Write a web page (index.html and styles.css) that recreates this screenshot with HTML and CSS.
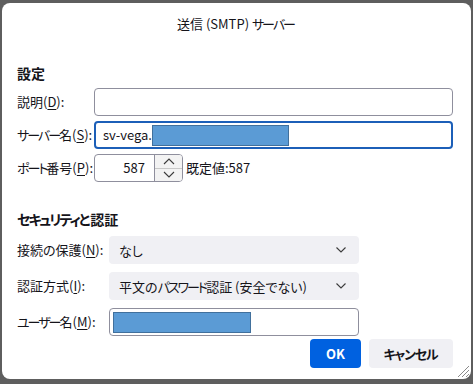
FILE: index.html
```html
<!DOCTYPE html>
<html lang="ja">
<head>
<meta charset="utf-8">
<title>送信 (SMTP) サーバー</title>
<link rel="stylesheet" href="styles.css">
</head>
<body>
<div class="dialog">
  <div class="title">送信 (SMTP) <span class="kana">サーバ</span>ー</div>

  <div class="heading first">設定</div>
  <div class="grid grid-settings">
    <label class="label">説明(<u>D</u>):</label>
    <div class="input"></div>

    <label class="label"><span class="kana">サーバー</span>名(<u>S</u>):</label>
    <div class="input focused"><span class="val">sv-vega.</span><span class="redact redact-host"></span></div>

    <label class="label"><span class="kana">ポート</span>番号(<u>P</u>):</label>
    <div class="port-row">
      <div class="number">
        <span class="num-val">587</span>
        <div class="spinner">
          <div class="spin">
            <svg width="12" height="7" viewBox="0 0 12 7"><path d="M1 6 L6 1 L11 6" fill="none" stroke="#3b3b3b" stroke-width="1.1"/></svg>
          </div>
          <div class="spin">
            <svg width="12" height="7" viewBox="0 0 12 7"><path d="M1 1 L6 6 L11 1" fill="none" stroke="#3b3b3b" stroke-width="1.1"/></svg>
          </div>
        </div>
      </div>
      <span class="default">既定値:587</span>
    </div>
  </div>

  <div class="heading second"><span class="kana">セキュリティ</span>と認証</div>
  <div class="grid grid-security">
    <label class="label">接続の保護(<u>N</u>):</label>
    <div class="select"><span>なし</span>
      <svg class="chev" width="10" height="6" viewBox="0 0 10 6"><path d="M0.5 0.5 L5 5 L9.5 0.5" fill="none" stroke="#3b3b3b" stroke-width="1.1"/></svg>
    </div>

    <label class="label">認証方式(<u>I</u>):</label>
    <div class="select"><span>平文の<span class="kana">パスワード</span>認証 (安全でない)</span>
      <svg class="chev" width="10" height="6" viewBox="0 0 10 6"><path d="M0.5 0.5 L5 5 L9.5 0.5" fill="none" stroke="#3b3b3b" stroke-width="1.1"/></svg>
    </div>

    <label class="label"><span class="kana">ユーザー</span>名(<u>M</u>):</label>
    <div class="input user"><span class="redact redact-user"></span></div>
  </div>

  <div class="buttons">
    <button class="btn primary">OK</button>
    <button class="btn secondary"><span class="kana btn-kana">キャンセ</span>ル</button>
  </div>

  <svg class="grip" width="13" height="13" viewBox="0 0 13 13">
    <path d="M12 1 L1 12 M12 5 L5 12 M12 9 L9 12" stroke="#8a8a8a" stroke-width="1"/>
  </svg>
</div>
</body>
</html>
```

FILE: styles.css
```css
html, body {
  margin: 0;
  padding: 0;
}
body {
  width: 473px;
  height: 384px;
  overflow: hidden;
  background: #5e5e5e;
  font-family: "Noto Sans CJK JP", "Noto Sans", sans-serif;
  font-size: 13px;
  font-feature-settings: "palt" 1;
  color: #15141a;
}
.kana {
  letter-spacing: -2px;
}
.btn-kana {
  letter-spacing: -1.2px;
}
.dialog {
  position: relative;
  box-sizing: border-box;
  margin: 3px 2px 0 2px;
  height: 376px;
  background: #ffffff;
  border-radius: 8px;
  padding: 0 18px 0 15px;
  display: flex;
  flex-direction: column;
}
.title {
  height: 42px;
  line-height: 42px;
  text-align: center;
  margin-left: -15px;
  margin-right: -18px;
  font-size: 13px;
}
.heading {
  height: 20px;
  line-height: 20px;
  font-weight: 700;
  font-size: 14px;
}
.heading.first { margin-top: 18px; margin-bottom: 5px; }
.heading.second { margin-top: 27px; margin-bottom: 7px; }
.grid {
  display: grid;
  align-items: center;
}
.grid-settings {
  grid-template-columns: 77px 1fr;
  row-gap: 5px;
}
.grid-security {
  grid-template-columns: 92px 250px;
  row-gap: 8px;
}
.label {
  line-height: 20px;
  white-space: nowrap;
}
.label u {
  text-underline-offset: 2px;
}
.input {
  box-sizing: border-box;
  height: 28px;
  border: 1px solid #8f8f9d;
  border-radius: 4px;
  display: flex;
  align-items: center;
  padding-left: 8px;
}
.input.focused {
  border: 2px solid #1c5fb8;
  padding-left: 7px;
}
.val {
  line-height: 20px;
  font-feature-settings: normal;
}
.redact {
  display: block;
  background: #5b9bd5;
  border: 1px solid #41709c;
  box-sizing: border-box;
}
.redact-host {
  width: 137px;
  height: 21px;
}
.input.user {
  padding-left: 3px;
}
.redact-user {
  width: 138px;
  height: 21px;
}
.port-row {
  display: flex;
  align-items: center;
  gap: 3px;
}
.number {
  box-sizing: border-box;
  width: 89px;
  height: 28px;
  border: 1px solid #8f8f9d;
  border-radius: 4px;
  display: flex;
  align-items: stretch;
}
.num-val {
  flex: 1;
  text-align: right;
  padding-right: 9px;
  line-height: 26px;
}
.spinner {
  width: 27px;
  display: flex;
  flex-direction: column;
  border-left: 1px solid #8f8f9d;
  background: #f3f3f3;
  border-radius: 0 3px 3px 0;
}
.spin {
  flex: 1;
  display: flex;
  align-items: center;
  justify-content: center;
}
.spin + .spin {
  border-top: 1px solid #c8c8c8;
}
.default {
  line-height: 20px;
}
.select {
  box-sizing: border-box;
  height: 28px;
  background: #f0f0f4;
  border-radius: 4px;
  display: flex;
  align-items: center;
  justify-content: space-between;
  padding: 0 13px 0 10px;
}
.chev {
  display: block;
}
.buttons {
  margin-top: 3px;
  display: flex;
  justify-content: flex-end;
  gap: 8px;
}
.btn {
  box-sizing: border-box;
  height: 29px;
  border: none;
  border-radius: 4px;
  font-family: inherit;
  font-size: 13px;
  font-weight: 700;
  font-feature-settings: "palt" 1;
  padding: 0;
}
.btn.primary {
  width: 51px;
  background: #0061e0;
  color: #ffffff;
}
.btn.secondary {
  width: 84px;
  background: #f0f0f4;
  color: #15141a;
}
.grip {
  position: absolute;
  right: 1px;
  bottom: 1px;
}
```
